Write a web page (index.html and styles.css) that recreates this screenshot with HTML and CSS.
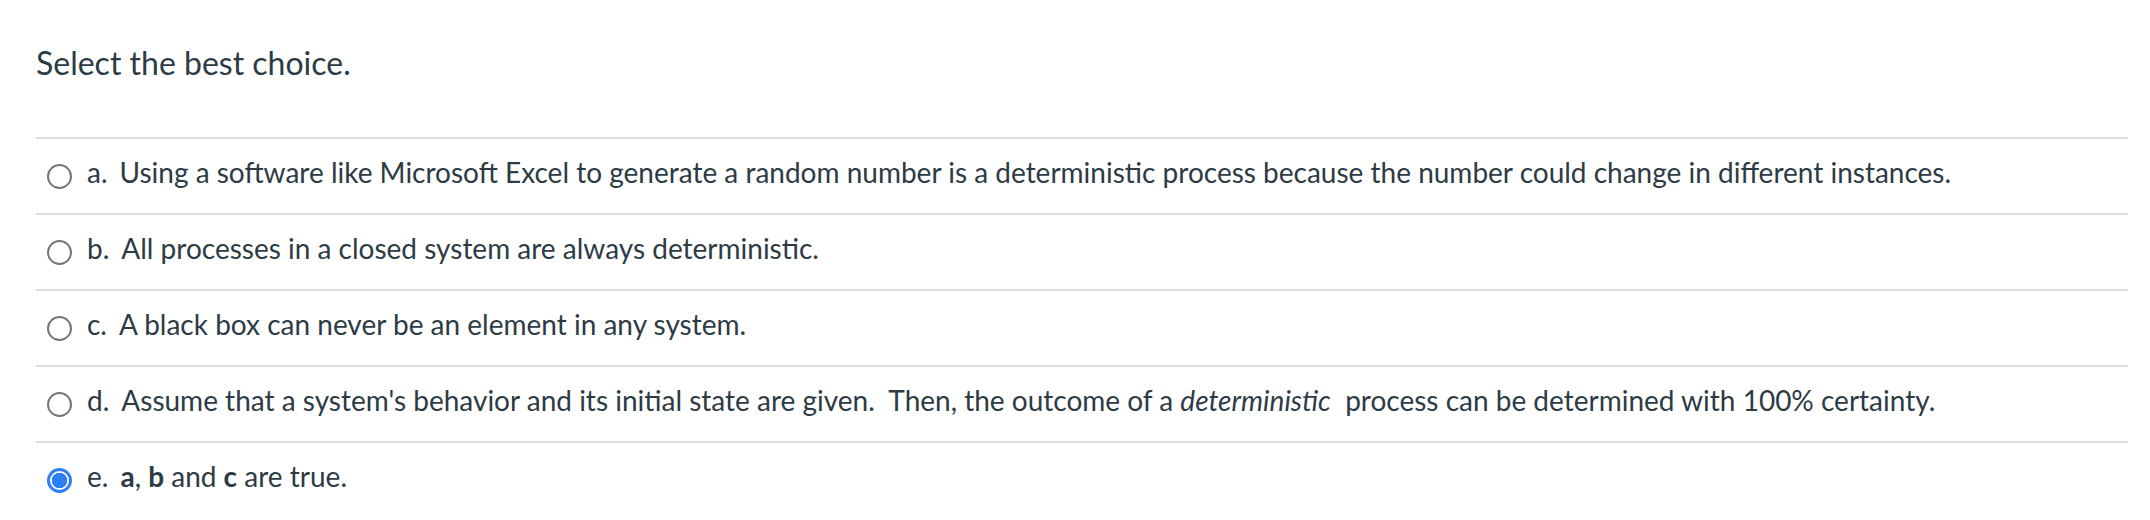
FILE: index.html
```html
<!DOCTYPE html>
<html lang="en">
<head>
<meta charset="utf-8">
<title>Select the best choice.</title>
<link rel="stylesheet" href="styles.css">
</head>
<body>
<div class="page">
  <div class="question">Select the best choice.</div>
  <div class="answers">
    <div class="answer">
      <span class="radio"></span>
      <span class="letter">a.</span>
      <span class="text">Using a software like Microsoft Excel to generate a random number is a deterministic process because the number could change in different instances.</span>
    </div>
    <div class="answer">
      <span class="radio"></span>
      <span class="letter">b.</span>
      <span class="text">All processes in a closed system are always deterministic.</span>
    </div>
    <div class="answer">
      <span class="radio"></span>
      <span class="letter">c.</span>
      <span class="text">A black box can never be an element in any system.</span>
    </div>
    <div class="answer">
      <span class="radio"></span>
      <span class="letter">d.</span>
      <span class="text">Assume that a system's behavior and its initial state are given.&nbsp; Then, the outcome of a <em>deterministic</em>&nbsp; process can be determined with 100% certainty.</span>
    </div>
    <div class="answer">
      <span class="radio checked"></span>
      <span class="letter">e.</span>
      <span class="text"><strong>a</strong>, <strong>b</strong> and <strong>c</strong> are true.</span>
    </div>
  </div>
</div>
</body>
</html>
```
FILE: styles.css
```css
html, body {
  margin: 0;
  padding: 0;
  background: #ffffff;
}

.page {
  padding: 0 22px 0 36px;
  font-family: Lato, "Open Sans", "Liberation Sans", sans-serif;
  color: #2d3b45;
}

.question {
  font-size: 32px;
  line-height: 38px;
  padding: 44px 0 55px 0;
}

.answer {
  display: flex;
  align-items: center;
  height: 74px;
  border-top: 2px solid #dcdcdc;
  font-size: 28px;
}

.radio {
  flex: none;
  box-sizing: border-box;
  width: 25px;
  height: 25px;
  border-radius: 50%;
  border: 2px solid #767676;
  margin-left: 11px;
  margin-right: 15px;
  background: #fff;
}

.radio.checked {
  border: 3px solid #2d7ff9;
  background: radial-gradient(circle, #2d7ff9 0 7.5px, #ffffff 8px);
}

.letter,
.text {
  line-height: 32px;
  padding-bottom: 8px;
  white-space: nowrap;
}

.letter {
  margin-right: 12px;
}

.text strong {
  font-weight: 700;
}
```
